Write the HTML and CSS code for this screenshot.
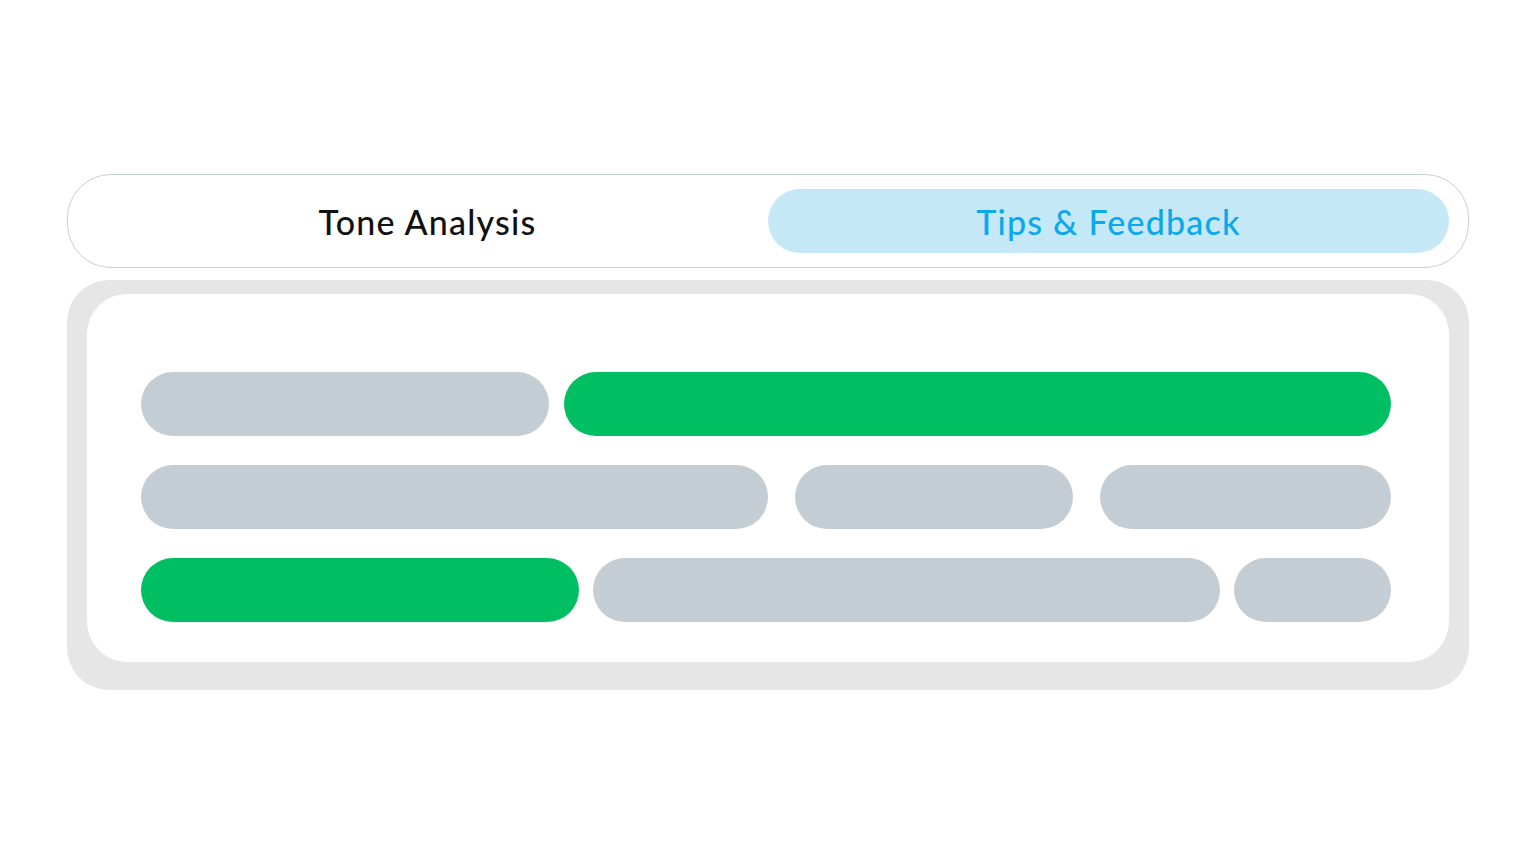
FILE: index.html
```html
<!DOCTYPE html>
<html lang="en">
<head>
<meta charset="utf-8">
<title>Tone Analysis</title>
<link rel="stylesheet" href="styles.css">
</head>
<body>
<main class="wrap">
  <nav class="tabs">
    <div class="tab">Tone Analysis</div>
    <div class="tab tab-active">Tips &amp; Feedback</div>
  </nav>
  <section class="card">
    <div class="card-inner">
      <div class="row">
        <span class="bar gray" style="width:408px"></span>
        <span class="bar green" style="width:827px"></span>
      </div>
      <div class="row row-wide">
        <span class="bar gray" style="width:627px"></span>
        <span class="bar gray" style="width:278px"></span>
        <span class="bar gray" style="width:291px"></span>
      </div>
      <div class="row">
        <span class="bar green" style="width:438px"></span>
        <span class="bar gray" style="width:627px"></span>
        <span class="bar gray" style="width:157px"></span>
      </div>
    </div>
  </section>
</main>
</body>
</html>
```
FILE: styles.css
```css
html, body {
  margin: 0;
  padding: 0;
  background: #ffffff;
}
body {
  font-family: "Lato", "Noto Sans", sans-serif;
}
.wrap {
  width: 1402px;
  margin-left: 67px;
  padding-top: 174px;
}
.tabs {
  box-sizing: border-box;
  height: 94px;
  border: 1.5px solid #c8cfd7;
  border-radius: 44px;
  padding: 14px 19px;
  display: grid;
  grid-template-columns: 1fr 1fr;
}
.tab {
  height: 64px;
  border-radius: 32px;
  display: flex;
  align-items: center;
  justify-content: center;
  font-size: 34px;
  font-weight: 500;
  color: #111111;
  letter-spacing: 1.2px;
}
.tab-active {
  background: #c5e8f7;
  color: #0ca8ec;
}
.card {
  margin-top: 12px;
  background: #e6e6e6;
  border-radius: 42px;
  padding: 14px 20px 28px;
}
.card-inner {
  background: #ffffff;
  border-radius: 40px;
  height: 368px;
  box-sizing: border-box;
  padding: 78px 58px 0 54px;
  display: flex;
  flex-direction: column;
  gap: 29px;
}
.row {
  display: flex;
  gap: 14.5px;
}
.row-wide {
  gap: 27px;
}
.bar {
  display: block;
  height: 64px;
  border-radius: 32px;
}
.gray {
  background: #c5cdd4;
}
.green {
  background: #00bf63;
}
```
